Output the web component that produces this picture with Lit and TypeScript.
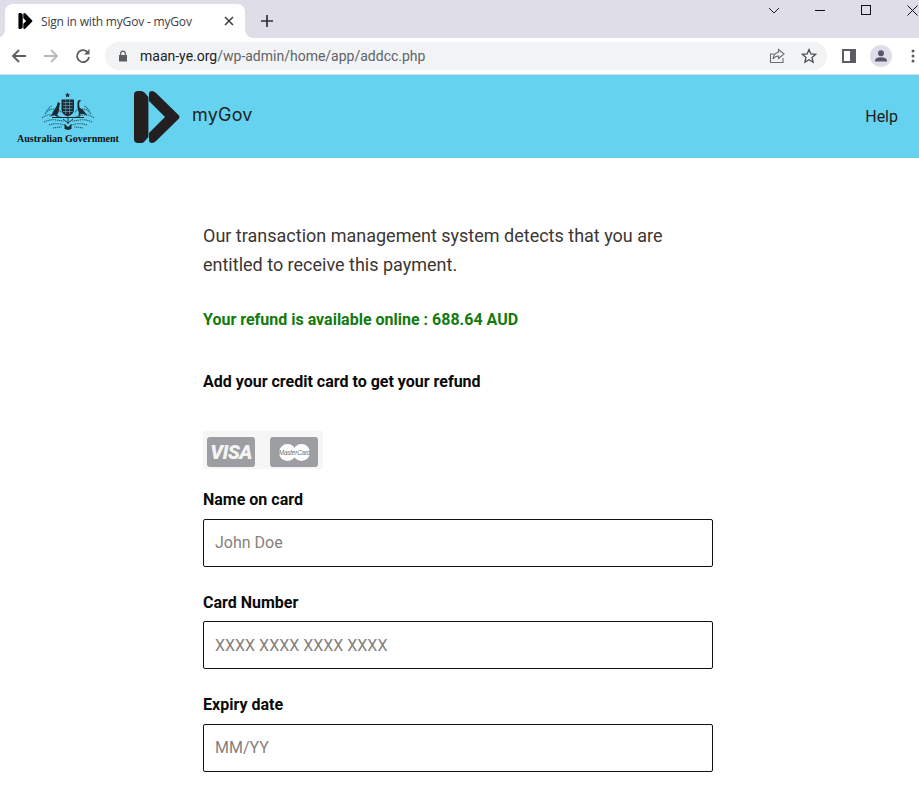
import { LitElement, html, css, svg } from "lit";
import { customElement } from "lit/decorators.js";

const crest = svg`
  <g fill="none" stroke="#1f5f75" stroke-width="1.1" stroke-dasharray="1.2 .7">
    <path d="M4 22q3-5 9-5t7 4"/><path d="M1 26q5-4 11-3t9 3"/>
    <path d="M3 30q6-3 12-2t8 1"/><path d="M8 33q6-2 11-1t6 1"/>
    <path d="M6 19q2-4 5-5"/><path d="M12 36q5-1 9-1"/>
    <path d="M50 22q-3-5-9-5t-7 4"/><path d="M53 26q-5-4-11-3t-9 3"/>
    <path d="M51 30q-6-3-12-2t-8 1"/><path d="M46 33q-6-2-11-1t-6 1"/>
    <path d="M48 19q-2-4-5-5"/><path d="M42 36q-5-1-9-1"/>
  </g>
  <path d="M26.6 .6l.8 1.6 1.8.2-1.3 1.2.3 1.7-1.6-.8-1.6.8.3-1.7-1.3-1.2 1.8-.2z" fill="#1c2a33"/>
  <path d="M20.5 7.5h12.500v10q0 5-6.250 7-6.250-2-6.250-7z" fill="#1c2a33"/>
  <path d="M22 10.500h9.500M22 13.500h9.500M22 16.500h9.500M22 19.500h9.500M24.800 8v14M28.500 8v14" stroke="#4f98ad" stroke-width=".8"/>
  <path d="M17.500 10l1 1.200 1 0-.8 1.500-.5 3q0 4.500-2 7l1.500 2.300-2-.5-2.500-1.500-4.500 1.800 2.500-2.500q.5-3 2.500-5l2-3.500q.5-2 1.300-3.800z" fill="#1c2a33"/>
  <path d="M36.500 10q.5-2.500 2.500-2l1.300 1-1.800.5q-.7 3.500.2 6.500 3.500 1 5 4l2.800 3.500-4.500-1.800-3 .8-.5 2.500h-1l.3-4.500q-2-4.500-1.300-10.500z" fill="#1c2a33"/>
  <path d="M11 25.500h32" stroke="#1c2a33" stroke-width="1"/>
  <path d="M23.500 32l3.500 3 3.500-3v5l-3.500 1-3.500-1z" fill="#1c2a33"/>
  <path d="M27 25v7M22 27l5 4M32 27l-5 4" stroke="#1c2a33" stroke-width=".9"/>
`;

@customElement("app-root")
export class AppRoot extends LitElement {
  static styles = css`
    :host { display: block; width: 919px; height: 795px; overflow: hidden; background: #fff; font-family: Roboto, sans-serif; }
    svg { display: block; flex: none; }
    .strip { height: 38px; background: #dfdde8; display: flex; align-items: flex-end; padding-left: 5px; }
    .tab { position: relative; flex: none; width: 240px; height: 34px; background: #fff; border-radius: 8px 8px 0 0; display: flex; align-items: center; padding: 0 11px 0 13px; box-sizing: border-box; }
    .tab::before, .tab::after { content: ""; position: absolute; bottom: 0; width: 8px; height: 8px; }
    .tab::before { left: -8px; background: radial-gradient(circle at 0 0, #dfdde8 7.5px, #fff 8px); }
    .tab::after { right: -8px; background: radial-gradient(circle at 100% 0, #dfdde8 7.5px, #fff 8px); }
    .title { margin-left: 8px; flex: 1; font: 12px "Open Sans", "Noto Sans", sans-serif; color: #3c4043; white-space: nowrap; letter-spacing: -0.18px; }
    .plus { flex: none; margin: 0 0 11px 16px; }
    .winctl { margin-left: auto; margin-right: -16px; align-self: flex-start; display: flex; flex: none; }
    .winbtn { width: 46px; height: 20px; display: flex; align-items: center; justify-content: center; }
    .toolbar { height: 36px; background: #fff; border-bottom: 1px solid #dadce0; display: flex; align-items: center; padding-left: 3px; }
    .nav { flex: none; width: 32px; height: 32px; display: flex; align-items: center; justify-content: center; }
    .omni { margin-left: 6px; width: 722px; height: 28px; border-radius: 14px; background: #f1f3f4; display: flex; align-items: center; padding: 0 2px 0 12px; box-sizing: border-box; flex: none; }
    .url { margin-left: 11px; flex: 1; font: 14px/28px Roboto, sans-serif; color: #5f6368; white-space: nowrap; }
    .url b { font-weight: 400; color: #202124; }
    .omni-ic { flex: none; width: 32px; display: flex; justify-content: center; }
    .tools { display: flex; align-items: center; margin-left: 6px; flex: none; }
    .tool { flex: none; width: 32px; display: flex; justify-content: center; }
    .head { height: 83px; background: #65d2f0; display: flex; align-items: center; padding: 0 21px 0 17px; }
    .gov { width: 102px; display: flex; flex-direction: column; align-items: center; color: #111; margin-top: 3px; }
    .gov span { font: bold 10px/11px "Liberation Serif", serif; white-space: nowrap; margin-top: 2px; }
    .gov svg { filter: blur(0.35px); }
    .mark { margin-left: 15px; margin-top: 1px; }
    .brand { margin-left: 12px; font: 400 18px "Inter", Lato, sans-serif; color: #231f20; margin-top: -4px; letter-spacing: 0.2px; }
    .help { margin-left: auto; font: 16px Roboto, sans-serif; color: #1c1c1c; }
    main { margin-left: 203px; width: 510px; padding-top: 63px; }
    .intro { margin: 0; font: 18px/29px Roboto, sans-serif; color: #3c3633; }
    .refund { margin: 31px 0 0; font: 700 16px/20px Roboto, sans-serif; color: #137a0e; }
    .add { margin: 42px 0 0; font: 700 16px/20px Roboto, sans-serif; color: #0a0a0a; }
    .cards { margin-top: 39px; width: 120px; height: 38px; background: #f6f6f6; display: flex; align-items: flex-end; gap: 15px; padding: 0 0 2px 4px; box-sizing: border-box; }
    .card { width: 48px; height: 30px; border-radius: 3px; background: #9c9ea1; display: flex; align-items: center; justify-content: center; color: #f4f4f4; }
    .visa { font: italic 900 20px Roboto, sans-serif; letter-spacing: -0.6px; }
    .mc-label { font: italic 6.4px "Liberation Sans", sans-serif; fill: #6f7175; letter-spacing: -0.2px; }
    .field { display: flex; flex-direction: column; }
    label { font: 700 16px/20px Roboto, sans-serif; color: #0a0a0a; }
    input { width: 510px; height: 48px; box-sizing: border-box; padding: 0 11px; border: 1px solid #111; border-radius: 2px; background: #fff; font: 16px Roboto, sans-serif; outline: none; }
    input::placeholder { color: #857f7d; opacity: 1; }
    .f1 { margin-top: 21px; }
    .f1 input { margin: 9px 0 0; padding-bottom: 2px; }
    .f2 { margin-top: 26px; }
    .f2 input { margin: 8px 0 0; }
    .f3 { margin-top: 26px; }
    .f3 input { margin: 9px 0 0; padding-bottom: 2px; }
  `;

  render() {
    return html`
      <div class="strip">
        <div class="tab">
          <svg viewBox="0 0 46 52" width="15" height="16"><path d="M0 4Q0 0 4 0H7Q9 0 10.500 1.500L14 5V47L10.500 50.500Q9 52 7 52H4Q0 52 0 48Z" fill="#000"/><path d="M16 3Q16 0 19 0 21 0 23 2L45 24.500Q46 26 45 27.500L23 50Q21 52 19 52 16 52 16 49V35L25 26 16 17Z" fill="#000"/></svg>
          <span class="title">Sign in with myGov - myGov</span>
          <svg viewBox="0 0 10 10" width="10" height="10"><path d="M1 1l8 8M9 1l-8 8" stroke="#3c4043" stroke-width="1.6"/></svg>
        </div>
        <svg class="plus" viewBox="0 0 12 12" width="12" height="12"><path d="M6 0v12M0 6h12" stroke="#303236" stroke-width="1.7"/></svg>
        <div class="winctl">
          <div class="winbtn"><svg viewBox="0 0 12 7" width="12" height="7"><path d="M1 1l5 5 5-5" fill="none" stroke="#222" stroke-width="1"/></svg></div>
          <div class="winbtn"><svg viewBox="0 0 10 1" width="10" height="1"><path d="M0 .5h10" stroke="#111"/></svg></div>
          <div class="winbtn"><svg viewBox="0 0 10 10" width="10" height="10"><rect x=".5" y=".5" width="9" height="9" fill="none" stroke="#111"/></svg></div>
          <div class="winbtn"><svg viewBox="0 0 11 11" width="11" height="11"><path d="M.5.5l10 10M10.5.5l-10 10" stroke="#111"/></svg></div>
        </div>
      </div>
      <div class="toolbar">
        <div class="nav"><svg viewBox="0 0 16 16" width="16" height="16"><path d="M15 8H2M8 2L2 8l6 6" fill="none" stroke="#5a5d62" stroke-width="1.8"/></svg></div>
        <div class="nav"><svg viewBox="0 0 16 16" width="16" height="16"><path d="M1 8h13M8 2l6 6-6 6" fill="none" stroke="#b6b8bb" stroke-width="1.8"/></svg></div>
        <div class="nav"><svg viewBox="0 0 16 16" width="16" height="16"><path d="M13.200 5A6 6 0 1 0 14 9" fill="none" stroke="#5a5d62" stroke-width="1.8"/><path d="M14.500 1v5.500H9z" fill="#5a5d62"/></svg></div>
        <div class="omni">
          <svg viewBox="0 0 12 12" width="12" height="12"><path d="M2 5h8v6.500H2z" fill="#5a5d62"/><path d="M3.700 5V3.400a2.300 2.300 0 0 1 4.600 0V5" fill="none" stroke="#5a5d62" stroke-width="1.2"/></svg>
          <span class="url"><b>maan-ye.org</b>/wp-admin/home/app/addcc.php</span>
          <div class="omni-ic"><svg viewBox="0 0 16 16" width="16" height="16"><path d="M14 10v4.500H1.500V6H5" fill="none" stroke="#6a6d71" stroke-width="1.1"/><path d="M9.500 1.500L15 6l-5.500 4.500V8Q6 8 4 11q.5-6 5.500-6.800z" fill="none" stroke="#6a6d71" stroke-width="1.1"/></svg></div>
          <div class="omni-ic"><svg viewBox="0 0 16 16" width="16" height="16"><path d="M8 1.600l1.900 4.400 4.700.4-3.600 3.100 1.100 4.700L8 11.700l-4.100 2.500L5 9.500 1.400 6.400l4.700-.4z" fill="none" stroke="#4a4d52" stroke-width="1.3"/></svg></div>
        </div>
        <div class="tools">
          <div class="tool"><svg viewBox="0 0 14 14" width="14" height="14"><rect x="1" y="1" width="12" height="12" fill="none" stroke="#5a5d62" stroke-width="2"/><rect x="8" y="1" width="5" height="12" fill="#5a5d62"/></svg></div>
          <div class="tool"><svg viewBox="0 0 22 22" width="22" height="22"><circle cx="11" cy="11" r="11" fill="#dfdde8"/><circle cx="11" cy="8.200" r="3" fill="#55586b"/><path d="M5 16q0-3.700 6-3.700t6 3.700v.6H5z" fill="#55586b"/></svg></div>
          <div class="tool"><svg viewBox="0 0 4 14" width="4" height="14"><circle cx="2" cy="2" r="1.500" fill="#5a5d62"/><circle cx="2" cy="7" r="1.500" fill="#5a5d62"/><circle cx="2" cy="12" r="1.500" fill="#5a5d62"/></svg></div>
        </div>
      </div>
      <header class="head">
        <div class="gov">
          <svg viewBox="0 0 54 39" width="54" height="39">${crest}</svg>
          <span>Australian Government</span>
        </div>
        <svg class="mark" viewBox="0 0 46 52" width="46" height="52"><path d="M0 4Q0 0 4 0H7Q9 0 10.500 1.500L14.400 6V46L10.500 50.500Q9 52 7 52H4Q0 52 0 48Z" fill="#231f20"/><path d="M15 3Q15 0 18 0 20 0 22 2L45 24.500Q46 26 45 27.500L22 50Q20 52 18 52 15 52 15 49V42L31 26 15 10Z" fill="#231f20"/></svg>
        <span class="brand">myGov</span>
        <span class="help">Help</span>
      </header>
      <main>
        <p class="intro">Our transaction management system detects that you are<br>entitled to receive this payment.</p>
        <p class="refund">Your refund is available online : 688.64 AUD</p>
        <p class="add">Add your credit card to get your refund</p>
        <div class="cards">
          <div class="card"><span class="visa">VISA</span></div>
          <div class="card">
            <svg viewBox="0 0 31 17" width="31" height="17"><circle cx="8.500" cy="8.500" r="8.500" fill="#fff"/><circle cx="22.500" cy="8.500" r="8.500" fill="#fff"/><text class="mc-label" x="15.500" y="10.800" text-anchor="middle">MasterCard</text></svg>
          </div>
        </div>
        <div class="field f1"><label>Name on card</label><input placeholder="John Doe"></div>
        <div class="field f2"><label>Card Number</label><input placeholder="XXXX XXXX XXXX XXXX"></div>
        <div class="field f3"><label>Expiry date</label><input placeholder="MM/YY"></div>
      </main>
    `;
  }
}
